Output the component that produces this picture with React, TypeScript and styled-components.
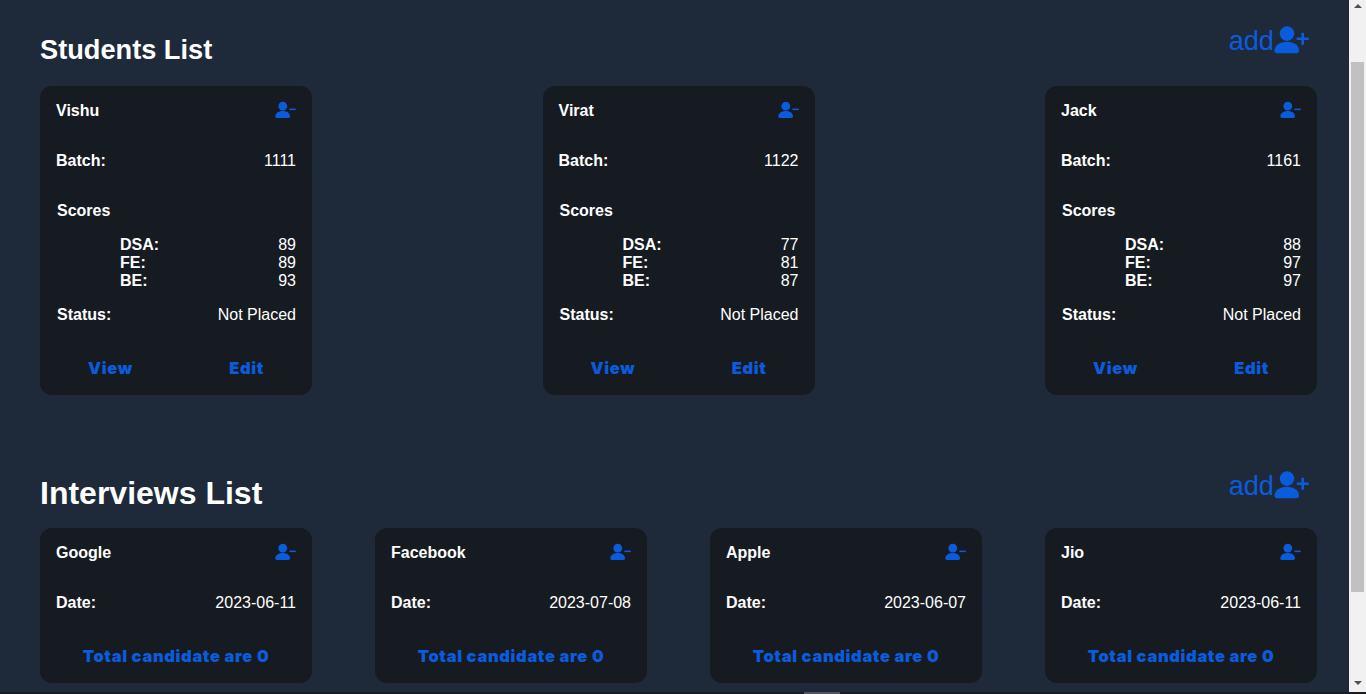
import React from 'react'
import styled, { createGlobalStyle } from 'styled-components'

const blue = '#0b5cdc'

type Student = { name: string; batch: number; dsa: number; fe: number; be: number }
type Interview = { company: string; date: string }

const students: Student[] = [
  { name: 'Vishu', batch: 1111, dsa: 89, fe: 89, be: 93 },
  { name: 'Virat', batch: 1122, dsa: 77, fe: 81, be: 87 },
  { name: 'Jack', batch: 1161, dsa: 88, fe: 97, be: 97 },
]

const interviews: Interview[] = [
  { company: 'Google', date: '2023-06-11' },
  { company: 'Facebook', date: '2023-07-08' },
  { company: 'Apple', date: '2023-06-07' },
  { company: 'Jio', date: '2023-06-11' },
]

const PersonIcon: React.FC<{ sign: 'plus' | 'minus'; className?: string }> = ({ sign, className }) => (
  <svg viewBox="0 0 35 29" fill="currentColor" className={className}>
    <circle cx="13" cy="8.6" r="7.3" />
    <path d="M.5 25.6C.5 20.4 6 16.8 13 16.8s12 3.6 12 8.8c0 1.8-1 2.7-2.6 2.7H3.1C1.5 28.3.5 27.4.5 25.6z" />
    {sign === 'plus' ? (
      <path d="M27.4 7.7h2.6v4.7h4.7V15H30v4.7h-2.6V15h-4.7v-2.6h4.7z" />
    ) : (
      <rect x="24" y="12.6" width="10.6" height="2.6" />
    )}
  </svg>
)

const App: React.FC = () => {
  return (
    <Screen>
      <GlobalStyle />
      <Window>
        <Main>
          <Header $height={86}>
            <StudentsTitle>Students List</StudentsTitle>
            <AddLink $top={25}>add<AddIcon sign="plus" /></AddLink>
          </Header>
          <CardRow>
            {students.map((s) => (
              <Card key={s.name} $height={309}>
                <NameRow>
                  <strong>{s.name}</strong>
                  <RemoveIcon sign="minus" />
                </NameRow>
                <InfoRow>
                  <strong>Batch:</strong>
                  <span>{s.batch}</span>
                </InfoRow>
                <ScoresLabel>Scores</ScoresLabel>
                <Scores>
                  <ScoreRow><strong>DSA:</strong><span>{s.dsa}</span></ScoreRow>
                  <ScoreRow><strong>FE:</strong><span>{s.fe}</span></ScoreRow>
                  <ScoreRow><strong>BE:</strong><span>{s.be}</span></ScoreRow>
                </Scores>
                <StatusRow>
                  <strong>Status:</strong>
                  <span>Not Placed</span>
                </StatusRow>
                <Actions>
                  <ActionLink>View</ActionLink>
                  <ActionLink>Edit</ActionLink>
                </Actions>
              </Card>
            ))}
          </CardRow>

          <Header $height={133}>
            <InterviewsTitle>Interviews List</InterviewsTitle>
            <AddLink $top={75}>add<AddIcon sign="plus" /></AddLink>
          </Header>
          <CardRow>
            {interviews.map((i) => (
              <Card key={i.company} $height={155}>
                <NameRow>
                  <strong>{i.company}</strong>
                  <RemoveIcon sign="minus" />
                </NameRow>
                <InfoRow>
                  <strong>Date:</strong>
                  <span>{i.date}</span>
                </InfoRow>
                <Total>Total candidate are 0</Total>
              </Card>
            ))}
          </CardRow>
        </Main>
        <ScrollBar>
          <ArrowUp />
          <ThumbTrack>
            <Thumb />
          </ThumbTrack>
          <ArrowDown />
        </ScrollBar>
      </Window>
      <BottomStrip>
        <StripTab />
      </BottomStrip>
    </Screen>
  )
}

export default App

const GlobalStyle = createGlobalStyle`
  html, body {
    margin: 0;
    padding: 0;
    overflow: hidden;
  }
  * {
    box-sizing: border-box;
  }
`

const Screen = styled.div`
  width: 1366px;
  height: 694px;
  display: flex;
  flex-direction: column;
  overflow: hidden;
  font-family: 'Liberation Sans', Arial, sans-serif;
  font-size: 16px;
  color: #fff;
`

const Window = styled.div`
  flex: 1;
  display: flex;
  min-height: 0;
`

const Main = styled.main`
  flex: 1;
  background: #1e2a3a;
  padding: 0 32px 0 40px;
  min-width: 0;
`

const Header = styled.header<{ $height: number }>`
  height: ${(p) => p.$height}px;
  display: flex;
  justify-content: space-between;
  align-items: flex-start;
`

const StudentsTitle = styled.h2`
  margin: 34px 0 0;
  font-size: 27.2px;
  line-height: 32px;
  font-weight: 700;
`

const InterviewsTitle = styled.h1`
  margin: 80px 0 0;
  font-size: 32px;
  line-height: 37px;
  font-weight: 700;
`

const AddLink = styled.a<{ $top: number }>`
  margin: ${(p) => p.$top}px 8px 0 0;
  display: flex;
  align-items: center;
  font-size: 27.2px;
  line-height: 32px;
  color: ${blue};
`

const AddIcon = styled(PersonIcon)`
  width: 35px;
  height: 29px;
  margin-top: -3px;
`

const CardRow = styled.div`
  display: flex;
  justify-content: space-between;
`

const Card = styled.article<{ $height: number }>`
  width: 272px;
  height: ${(p) => p.$height}px;
  background: #161b22;
  border-radius: 12px;
  padding: 16px;
  line-height: 18px;
  display: flex;
  flex-direction: column;
`

const NameRow = styled.div`
  display: flex;
  justify-content: space-between;
  align-items: center;
  height: 18px;
`

const RemoveIcon = styled(PersonIcon)`
  width: 21px;
  height: 17.4px;
  margin-top: -3px;
  color: ${blue};
`

const InfoRow = styled.div`
  display: flex;
  justify-content: space-between;
  margin-top: 32px;
`

const ScoresLabel = styled.strong`
  margin: 32px 0 0 1px;
`

const Scores = styled.div`
  margin: 16px 0 0 64px;
`

const ScoreRow = styled.div`
  display: flex;
  justify-content: space-between;
`

const StatusRow = styled.div`
  display: flex;
  justify-content: space-between;
  margin: 16px 0 0 1px;
`

const Actions = styled.div`
  display: flex;
  justify-content: space-between;
  margin-top: 35px;
  padding: 0 32px;
`

const ActionLink = styled.a`
  color: ${blue};
  font-family: 'Arial Black', Inter, 'Liberation Sans', sans-serif;
  font-size: 16.5px;
  font-weight: 900;
  letter-spacing: 0.65px;
`

const Total = styled.a`
  margin-top: 35px;
  text-align: center;
  color: ${blue};
  font-family: 'Arial Black', Inter, 'Liberation Sans', sans-serif;
  font-size: 16.5px;
  font-weight: 900;
  letter-spacing: 0.65px;
`

const ScrollBar = styled.div`
  width: 17px;
  background: #f1f1f1;
  display: flex;
  flex-direction: column;
  align-items: center;
`

const ArrowUp = styled.div`
  flex: none;
  margin: 4px 0 0;
  width: 0;
  height: 0;
  border-left: 4px solid transparent;
  border-right: 4px solid transparent;
  border-bottom: 4px solid #505050;
`

const ArrowDown = styled.div`
  flex: none;
  margin: 0 0 7px;
  width: 0;
  height: 0;
  border-left: 4px solid transparent;
  border-right: 4px solid transparent;
  border-top: 4px solid #505050;
`

const ThumbTrack = styled.div`
  flex: 1;
  align-self: stretch;
  padding: 54px 2px 0;
`

const Thumb = styled.div`
  height: 530px;
  background: #c1c1c1;
`

const BottomStrip = styled.div`
  flex: none;
  height: 2px;
  background: #1a1c1e;
  padding-left: 804px;
`

const StripTab = styled.div`
  width: 36px;
  height: 2px;
  background: #555;
`
